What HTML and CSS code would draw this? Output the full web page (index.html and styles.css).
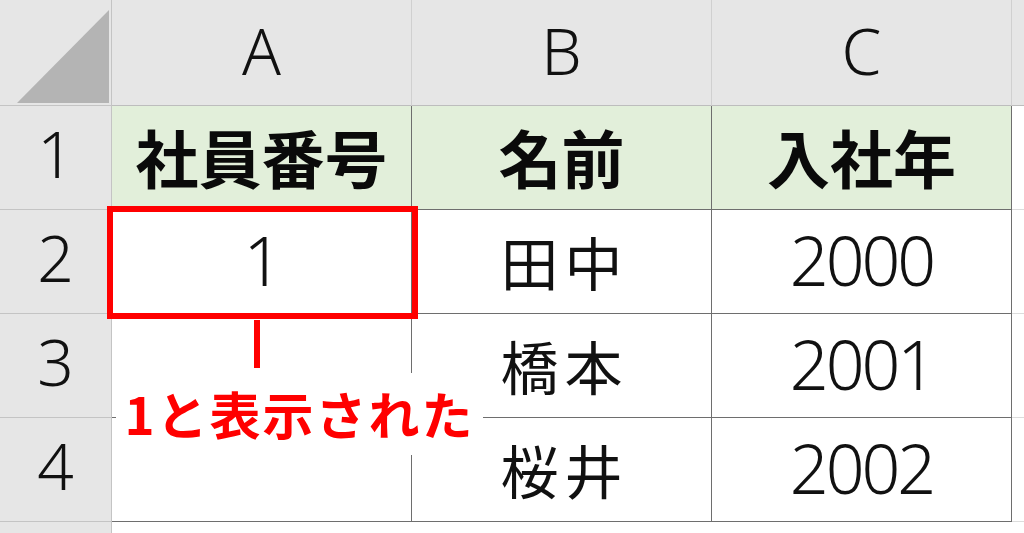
FILE: index.html
```html
<!DOCTYPE html>
<html lang="ja">
<head>
<meta charset="utf-8">
<title>Excel</title>
<link rel="stylesheet" href="styles.css">
</head>
<body>
<div class="sheet">
  <div class="grid">
    <div class="corner">
      <svg class="tri" width="112" height="106" viewBox="0 0 112 106"><polygon points="17,103 109,10 109,103" fill="#b4b4b4"/></svg>
    </div>
    <div class="colhead">A</div>
    <div class="colhead">B</div>
    <div class="colhead">C</div>
    <div class="colhead rest"></div>

    <div class="rowhead">1</div>
    <div class="cell title">社員番号</div>
    <div class="cell title">名前</div>
    <div class="cell title">入社年</div>
    <div class="outside"></div>

    <div class="rowhead">2</div>
    <div class="cell num">1</div>
    <div class="cell name">田中</div>
    <div class="cell num">2000</div>
    <div class="outside"></div>

    <div class="rowhead">3</div>
    <div class="cell"></div>
    <div class="cell name">橋本</div>
    <div class="cell num">2001</div>
    <div class="outside"></div>

    <div class="rowhead">4</div>
    <div class="cell"></div>
    <div class="cell name">桜井</div>
    <div class="cell num">2002</div>
    <div class="outside"></div>

    <div class="rowhead last"></div>
    <div class="tail"></div>
    <div class="tail"></div>
    <div class="tail"></div>
    <div class="tail rest"></div>
  </div>

  <div class="highlight"></div>
  <div class="connector"></div>
  <div class="callout">1と表示された</div>
</div>
</body>
</html>
```
FILE: styles.css
```css
* { box-sizing: border-box; }
html, body { margin: 0; padding: 0; background: #ffffff; }
body { width: 1024px; height: 533px; overflow: hidden; }

.sheet {
  position: relative;
  width: 1024px;
  height: 533px;
  font-family: "Noto Sans", "Noto Sans CJK JP", sans-serif;
  color: #111111;
}

.grid {
  display: grid;
  grid-template-columns: 112px 300px 300px 300px 12px;
  grid-template-rows: 106px 104px 104px 104px 104px 11px;
  width: 1024px;
  height: 533px;
}

.corner {
  background: #e6e6e6;
  border-right: 1px solid #c4c4c4;
  border-bottom: 1px solid #c4c4c4;
  position: relative;
}
.tri { display: block; }

.colhead {
  background: #e6e6e6;
  border-right: 1px solid #d0d0d0;
  border-bottom: 1px solid #bdbdbd;
  display: flex;
  align-items: center;
  justify-content: center;
  font-family: "Noto Sans", sans-serif;
  font-weight: 300;
  font-size: 64px;
  line-height: 1;
  padding-bottom: 4px;
}
.colhead.rest { border-right: none; }

.rowhead {
  background: #e6e6e6;
  border-right: 1px solid #c4c4c4;
  border-bottom: 1px solid #c4c4c4;
  display: flex;
  align-items: center;
  justify-content: center;
  font-family: "Noto Sans", sans-serif;
  font-weight: 300;
  font-size: 64px;
  line-height: 1;
  padding-bottom: 8px;
}
.rowhead.last { border-bottom: none; }

.cell {
  background: #ffffff;
  border-right: 1px solid #6e6e6e;
  border-bottom: 1px solid #6e6e6e;
  display: flex;
  align-items: center;
  justify-content: center;
  line-height: 1;
}

.title {
  background: #e2efda;
  font-family: "Noto Sans CJK JP", sans-serif;
  font-weight: 700;
  font-size: 63px;
  color: #0a0a0a;
  padding-bottom: 4px;
}

.name {
  font-family: "Noto Sans CJK JP", sans-serif;
  font-weight: 400;
  font-size: 58px;
  letter-spacing: 6px;
  padding-left: 6px;
  padding-bottom: 2px;
}

.num {
  font-family: "Noto Sans", sans-serif;
  font-weight: 300;
  font-size: 68px;
  letter-spacing: -3px;
  padding-bottom: 4px;
}

.outside {
  background: #ffffff;
  border-bottom: 1px solid #dcdcdc;
}

.tail { background: #ffffff; }
.tail.rest { background: #ffffff; }

.highlight {
  position: absolute;
  left: 107px;
  top: 206px;
  width: 311px;
  height: 113px;
  border: 6px solid #ff0000;
}

.connector {
  position: absolute;
  left: 254px;
  top: 320px;
  width: 6px;
  height: 48px;
  background: #ff0000;
}

.callout {
  position: absolute;
  left: 116px;
  top: 373px;
  width: 367px;
  height: 82px;
  background: #ffffff;
  display: flex;
  align-items: center;
  justify-content: center;
  font-family: "Noto Sans CJK JP", sans-serif;
  font-weight: 700;
  font-size: 51px;
  letter-spacing: 2px;
  color: #ff0000;
  line-height: 1;
  padding-bottom: 2px;
}
```
